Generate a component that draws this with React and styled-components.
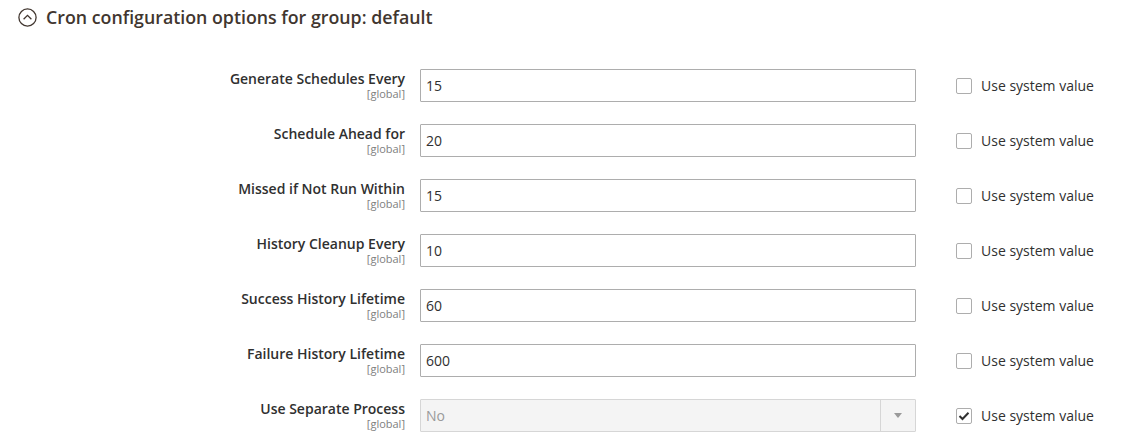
import React from 'react';
import styled, { createGlobalStyle } from 'styled-components';

const GlobalStyle = createGlobalStyle`
  body {
    margin: 0;
    background: #ffffff;
    font-family: "Open Sans", "Liberation Sans", sans-serif;
    color: #303030;
  }
`;

const rows = [
  { label: 'Generate Schedules Every', value: '15' },
  { label: 'Schedule Ahead for', value: '20' },
  { label: 'Missed if Not Run Within', value: '15' },
  { label: 'History Cleanup Every', value: '10' },
  { label: 'Success History Lifetime', value: '60' },
  { label: 'Failure History Lifetime', value: '600' },
];

const CollapseIcon = () => (
  <svg width="19" height="19" viewBox="0 0 19 19">
    <circle cx="9.5" cy="9.5" r="8.6" fill="none" stroke="#41362f" strokeWidth="1.3" />
    <path d="M5.6 11.2 L9.5 7.3 L13.4 11.2" fill="none" stroke="#41362f" strokeWidth="1.3" />
  </svg>
);

const CheckMark = () => (
  <svg width="12" height="10" viewBox="0 0 12 10">
    <path d="M1.5 5 L4.5 8 L10.5 1.8" fill="none" stroke="#303030" strokeWidth="2" />
  </svg>
);

export default function App() {
  return (
    <>
      <GlobalStyle />
      <Wrapper>
        <Title>
          <CollapseIcon />
          <span>Cron configuration options for group: default</span>
        </Title>
        <Form>
          {rows.map((r) => (
            <Row key={r.label}>
              <Label>
                <span>{r.label}</span>
                <Scope>[global]</Scope>
              </Label>
              <Input defaultValue={r.value} />
              <Inherit>
                <Box />
                <span>Use system value</span>
              </Inherit>
            </Row>
          ))}
          <Row>
            <Label>
              <span>Use Separate Process</span>
              <Scope>[global]</Scope>
            </Label>
            <Select>
              <span>No</span>
              <Arrow />
            </Select>
            <Inherit>
              <Box checked>
                <CheckMark />
              </Box>
              <span>Use system value</span>
            </Inherit>
          </Row>
        </Form>
      </Wrapper>
    </>
  );
}

const Wrapper = styled.div`
  padding: 7px 0 0 18px;
`;

const Title = styled.div`
  display: flex;
  align-items: center;
  gap: 9px;
  font-size: 17.8px;
  font-weight: 600;
  color: #41362f;
  height: 20px;
  span {
    line-height: 20px;
  }
`;

const Form = styled.div`
  margin-top: 42px;
  display: flex;
  flex-direction: column;
  gap: 22px;
`;

const Row = styled.div`
  display: grid;
  grid-template-columns: 387px 496px auto;
  column-gap: 15px;
  align-items: start;
  & > :last-child {
    margin-left: 25px;
  }
`;

const Label = styled.div`
  display: flex;
  flex-direction: column;
  align-items: flex-end;
  text-align: right;
  padding-top: 1px;
  font-size: 14px;
  font-weight: 600;
  color: #303030;
  line-height: 18px;
`;

const Scope = styled.span`
  font-size: 11px;
  font-weight: 400;
  color: #808080;
  line-height: 11px;
`;

const Input = styled.input`
  box-sizing: border-box;
  width: 496px;
  height: 33px;
  border: 1px solid #adadad;
  border-radius: 1px;
  padding: 0 5px;
  font-family: "Open Sans", "Liberation Sans", sans-serif;
  font-size: 14px;
  color: #303030;
  outline: none;
`;

const Select = styled.div`
  box-sizing: border-box;
  width: 496px;
  height: 33px;
  border: 1px solid #d6d6d6;
  border-radius: 1px;
  background: #f4f4f4;
  display: flex;
  align-items: center;
  justify-content: space-between;
  font-size: 14px;
  color: #9a9a9a;
  span {
    padding-left: 5px;
  }
`;

const Arrow = styled.div`
  width: 34px;
  height: 100%;
  border-left: 1px solid #d6d6d6;
  position: relative;
  &::after {
    content: '';
    position: absolute;
    left: 13px;
    top: 13px;
    border-left: 4px solid transparent;
    border-right: 4px solid transparent;
    border-top: 5px solid #9a9a9a;
  }
`;

const Inherit = styled.label`
  display: flex;
  align-items: center;
  gap: 9px;
  height: 33px;
  font-size: 14px;
  color: #303030;
`;

const Box = styled.span`
  box-sizing: border-box;
  width: 16px;
  height: 16px;
  border: 1px solid #adadad;
  border-radius: 2px;
  background: #fff;
  display: flex;
  align-items: center;
  justify-content: center;
  margin-top: 1px;
`;
